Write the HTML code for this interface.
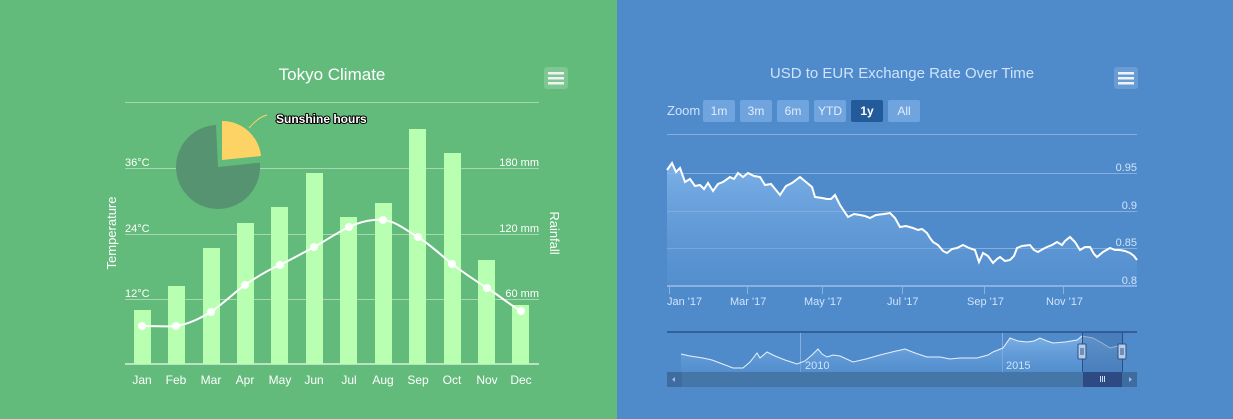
<!DOCTYPE html>
<html><head><meta charset="utf-8"><style>
html,body{margin:0;padding:0;width:1233px;height:419px;overflow:hidden;font-family:"Liberation Sans",sans-serif}
</style></head><body>
<svg width="1233" height="419" xmlns="http://www.w3.org/2000/svg" font-family="Liberation Sans, sans-serif">
<rect x="0" y="0" width="617" height="419" fill="#62BB7A"/>
<rect x="617" y="0" width="616" height="419" fill="#4F8BCB"/>

<!-- LEFT -->
<text x="332" y="80" fill="#fff" font-size="17" text-anchor="middle">Tokyo Climate</text>
<rect x="544" y="67" width="24" height="22" rx="3" fill="#fff" opacity="0.18"/>
<rect x="548" y="72" width="16" height="2.5" fill="#f2f2f2"/><rect x="548" y="77" width="16" height="2.5" fill="#f2f2f2"/><rect x="548" y="82" width="16" height="2.5" fill="#f2f2f2"/>
<g stroke="#a8d8b2" stroke-width="1">
<line x1="125" y1="102.5" x2="539" y2="102.5"/><line x1="125" y1="168.5" x2="539" y2="168.5"/><line x1="125" y1="234.5" x2="539" y2="234.5"/><line x1="125" y1="299.5" x2="539" y2="299.5"/>
</g>
<line x1="125" y1="364" x2="539" y2="364" stroke="#b8e4c0" stroke-width="2"/>
<g fill="#B8FFB2">
<rect x="134" y="310" width="17" height="54"/><rect x="168" y="286" width="17" height="78"/><rect x="203" y="248" width="17" height="116"/><rect x="237" y="223" width="17" height="141"/><rect x="271" y="207" width="17" height="157"/><rect x="306" y="173" width="17" height="191"/><rect x="340" y="217" width="17" height="147"/><rect x="375" y="203" width="17" height="161"/><rect x="409" y="129" width="17" height="235"/><rect x="444" y="153" width="17" height="211"/><rect x="478" y="260" width="17" height="104"/><rect x="512" y="305" width="17" height="59"/>
</g>
<path d="M142,326 C160,326 168,327 176,326 C190,324 200,318 211,312 C225,302 235,292 245,285 C258,276 268,270 280,265 C292,259 303,253 314,247 C327,240 338,232 349,227 C360,222 372,219 383,220 C396,221 407,231 418,237 C432,246 442,256 452,264 C464,273 476,281 487,288 C500,296 510,305 521,311" fill="none" stroke="#fff" stroke-width="2"/>
<g fill="#fff">
<circle cx="142" cy="326" r="4"/><circle cx="176" cy="326" r="4"/><circle cx="211" cy="312" r="4"/><circle cx="245" cy="285" r="4"/><circle cx="280" cy="265" r="4"/><circle cx="314" cy="247" r="4"/><circle cx="349" cy="227" r="4"/><circle cx="383" cy="220" r="4"/><circle cx="418" cy="237" r="4"/><circle cx="452" cy="264" r="4"/><circle cx="487" cy="288" r="4"/><circle cx="521" cy="311" r="4"/>
</g>
<path d="M218,167 L259.8,162.6 A42,42 0 1 1 216,125 Z" fill="#569370"/>
<path d="M222,160 L222,121 A39,39 0 0 1 261,156 Z" fill="#FDD365"/>
<path d="M249,128 C256,120 262,116 267,115" fill="none" stroke="#FDD365" stroke-width="1"/>
<text x="276" y="123" font-size="12" font-weight="bold" fill="#fff" stroke="#000" stroke-width="2" paint-order="stroke" stroke-linejoin="round">Sunshine hours</text>
<g fill="#fff" font-size="11">
<text x="125" y="166">36°C</text><text x="125" y="232">24°C</text><text x="125" y="297">12°C</text>
<text x="539" y="166" text-anchor="end">180 mm</text><text x="539" y="232" text-anchor="end">120 mm</text><text x="539" y="297" text-anchor="end">60 mm</text>
</g>
<text transform="translate(116,233) rotate(-90)" fill="#fff" font-size="13" text-anchor="middle">Temperature</text>
<text transform="translate(550,233) rotate(90)" fill="#fff" font-size="13" text-anchor="middle">Rainfall</text>
<g fill="#fff" font-size="12" text-anchor="middle">
<text x="142" y="384">Jan</text><text x="176" y="384">Feb</text><text x="211" y="384">Mar</text><text x="245" y="384">Apr</text><text x="280" y="384">May</text><text x="314" y="384">Jun</text><text x="349" y="384">Jul</text><text x="383" y="384">Aug</text><text x="418" y="384">Sep</text><text x="452" y="384">Oct</text><text x="487" y="384">Nov</text><text x="521" y="384">Dec</text>
</g>

<!-- RIGHT -->
<text x="902" y="78" fill="#CFE3FA" font-size="15" text-anchor="middle">USD to EUR Exchange Rate Over Time</text>
<rect x="1114" y="67" width="24" height="22" rx="3" fill="#fff" opacity="0.15"/>
<rect x="1118" y="72" width="16" height="2.5" fill="#eef4fb"/><rect x="1118" y="77" width="16" height="2.5" fill="#eef4fb"/><rect x="1118" y="82" width="16" height="2.5" fill="#eef4fb"/>
<text x="667" y="115" fill="#CFE3FA" font-size="13">Zoom</text>
<g font-size="12" text-anchor="middle">
<rect x="703" y="100" width="32" height="22" rx="2" fill="#6FA4DE"/><text x="719" y="115" fill="#E2EEFB">1m</text>
<rect x="740" y="100" width="32" height="22" rx="2" fill="#6FA4DE"/><text x="756" y="115" fill="#E2EEFB">3m</text>
<rect x="777" y="100" width="32" height="22" rx="2" fill="#6FA4DE"/><text x="793" y="115" fill="#E2EEFB">6m</text>
<rect x="814" y="100" width="32" height="22" rx="2" fill="#6FA4DE"/><text x="830" y="115" fill="#E2EEFB">YTD</text>
<rect x="851" y="100" width="32" height="22" rx="2" fill="#225A9A"/><text x="867" y="115" fill="#fff" font-weight="bold">1y</text>
<rect x="888" y="100" width="32" height="22" rx="2" fill="#6FA4DE"/><text x="904" y="115" fill="#E2EEFB">All</text>
</g>
<defs>
<linearGradient id="g1" x1="0" y1="0" x2="0" y2="1"><stop offset="0" stop-color="#8BBDF0" stop-opacity="0.75"/><stop offset="1" stop-color="#5A93D2" stop-opacity="0.4"/></linearGradient>
</defs>
<g stroke="#86AEDD" stroke-width="1">
<line x1="667" y1="134.5" x2="1137" y2="134.5"/><line x1="667" y1="173.5" x2="1137" y2="173.5"/><line x1="667" y1="211.5" x2="1137" y2="211.5"/><line x1="667" y1="248.5" x2="1137" y2="248.5"/>
</g>
<path d="M667,286 L667,170 L672,163 L676,172 L680,168 L685,182 L690,179 L695,186 L700,185 L704,189 L708,183 L713,191 L718,184 L723,182 L730,177 L734,179 L738,173 L743,177 L748,173 L754,176 L760,177 L765,185 L771,184 L780,195 L786,186 L792,183 L800,177 L806,182 L812,187 L815,197 L822,198 L827,199 L831,199 L835,195 L840,205 L848,217 L854,214 L860,215 L865,216 L870,218 L876,215 L884,214 L890,213 L895,218 L900,227 L906,226 L913,228 L918,230 L922,229 L927,233 L930,238 L933,242 L938,245 L943,251 L947,253 L952,249 L957,248 L963,245 L969,248 L975,250 L979,262 L983,253 L988,256 L993,263 L997,259 L1000,257 L1005,261 L1010,260 L1014,256 L1017,248 L1022,246 L1030,245 L1034,250 L1038,252 L1043,249 L1047,247 L1052,245 L1057,242 L1062,245 L1065,241 L1070,237 L1075,242 L1080,250 L1085,247 L1090,247 L1094,254 L1097,257 L1103,252 L1110,248 L1115,250 L1120,250 L1125,251 L1130,253 L1134,256 L1137,260 L1137,286 Z" fill="url(#g1)"/>
<path d="M667,170 L672,163 L676,172 L680,168 L685,182 L690,179 L695,186 L700,185 L704,189 L708,183 L713,191 L718,184 L723,182 L730,177 L734,179 L738,173 L743,177 L748,173 L754,176 L760,177 L765,185 L771,184 L780,195 L786,186 L792,183 L800,177 L806,182 L812,187 L815,197 L822,198 L827,199 L831,199 L835,195 L840,205 L848,217 L854,214 L860,215 L865,216 L870,218 L876,215 L884,214 L890,213 L895,218 L900,227 L906,226 L913,228 L918,230 L922,229 L927,233 L930,238 L933,242 L938,245 L943,251 L947,253 L952,249 L957,248 L963,245 L969,248 L975,250 L979,262 L983,253 L988,256 L993,263 L997,259 L1000,257 L1005,261 L1010,260 L1014,256 L1017,248 L1022,246 L1030,245 L1034,250 L1038,252 L1043,249 L1047,247 L1052,245 L1057,242 L1062,245 L1065,241 L1070,237 L1075,242 L1080,250 L1085,247 L1090,247 L1094,254 L1097,257 L1103,252 L1110,248 L1115,250 L1120,250 L1125,251 L1130,253 L1134,256 L1137,260" fill="none" stroke="#fff" stroke-width="2"/>
<line x1="667" y1="286" x2="1137" y2="286" stroke="#8CB3DF" stroke-width="2"/>
<g stroke="#8CB3DF"><line x1="669.5" y1="287" x2="669.5" y2="294"/><line x1="747.5" y1="287" x2="747.5" y2="294"/><line x1="822.5" y1="287" x2="822.5" y2="294"/><line x1="902.5" y1="287" x2="902.5" y2="294"/><line x1="984.5" y1="287" x2="984.5" y2="294"/><line x1="1063.5" y1="287" x2="1063.5" y2="294"/></g>
<g fill="#CFE3FA" font-size="11">
<text x="1137" y="171" text-anchor="end">0.95</text><text x="1137" y="209" text-anchor="end">0.9</text><text x="1137" y="246" text-anchor="end">0.85</text><text x="1137" y="284" text-anchor="end">0.8</text>
<text x="667" y="305">Jan '17</text><text x="730" y="305">Mar '17</text><text x="804" y="305">May '17</text><text x="887" y="305">Jul '17</text><text x="967" y="305">Sep '17</text><text x="1046" y="305">Nov '17</text>
</g>
<!-- navigator -->
<line x1="800.5" y1="332" x2="800.5" y2="372" stroke="#86AEDD"/>
<line x1="1002.5" y1="332" x2="1002.5" y2="372" stroke="#86AEDD"/>
<path d="M681,372 L681,354 L690,356 L703,358 L712,360 L720,363 L733,368 L743,368 L750,362 L757,353 L760,358 L767,352 L775,356 L785,360 L797,364 L805,361 L812,355 L818,349 L822,354 L827,357 L833,355 L840,356 L853,362 L866,359 L880,355 L892,352 L905,349 L915,353 L927,357 L940,357 L950,359 L960,358 L977,358 L988,355 L993,352 L1003,348 L1010,338 L1018,341 L1027,342 L1034,341 L1040,338 L1047,341 L1053,343 L1065,342 L1077,340 L1082,336 L1093,338 L1102,343 L1110,348 L1118,346 L1122,346 L1122,372 Z" fill="url(#g1)"/>
<path d="M681,354 L690,356 L703,358 L712,360 L720,363 L733,368 L743,368 L750,362 L757,353 L760,358 L767,352 L775,356 L785,360 L797,364 L805,361 L812,355 L818,349 L822,354 L827,357 L833,355 L840,356 L853,362 L866,359 L880,355 L892,352 L905,349 L915,353 L927,357 L940,357 L950,359 L960,358 L977,358 L988,355 L993,352 L1003,348 L1010,338 L1018,341 L1027,342 L1034,341 L1040,338 L1047,341 L1053,343 L1065,342 L1077,340 L1082,336 L1093,338 L1102,343 L1110,348 L1118,346 L1122,346" fill="none" stroke="#E8F1FB" stroke-width="1"/>
<rect x="1082" y="332" width="40" height="40" fill="#3E6FA8" opacity="0.45"/>
<line x1="667" y1="332" x2="1137" y2="332" stroke="#2A4F86" stroke-width="1.5"/>
<line x1="1082.5" y1="332" x2="1082.5" y2="387" stroke="#2A4F86"/>
<line x1="1122.5" y1="332" x2="1122.5" y2="387" stroke="#2A4F86"/>
<g fill="#CFE3FA" font-size="11"><text x="805" y="369">2010</text><text x="1006" y="369">2015</text></g>
<rect x="1078" y="344" width="8" height="15" rx="1" fill="#B8CCE6" stroke="#2A4F86"/>
<rect x="1118" y="344" width="8" height="15" rx="1" fill="#B8CCE6" stroke="#2A4F86"/>
<g stroke="#2A4F86"><line x1="1081" y1="348" x2="1081" y2="355"/><line x1="1083" y1="348" x2="1083" y2="355"/><line x1="1121" y1="348" x2="1121" y2="355"/><line x1="1123" y1="348" x2="1123" y2="355"/></g>
<rect x="667" y="372" width="470" height="15" fill="#4576A8"/>
<rect x="667" y="372" width="15" height="15" fill="#3F6C9E"/>
<rect x="1122" y="372" width="15" height="15" fill="#3F6C9E"/>
<rect x="1083" y="372" width="39" height="15" fill="#2D4A82"/>
<path d="M675,377 L672,379.5 L675,382 Z" fill="#9FBFE6"/>
<path d="M1129,377 L1132,379.5 L1129,382 Z" fill="#9FBFE6"/>
<g stroke="#CFDDF0"><line x1="1100.5" y1="376" x2="1100.5" y2="382"/><line x1="1102.5" y1="376" x2="1102.5" y2="382"/><line x1="1104.5" y1="376" x2="1104.5" y2="382"/></g>
</svg>
</body></html>
